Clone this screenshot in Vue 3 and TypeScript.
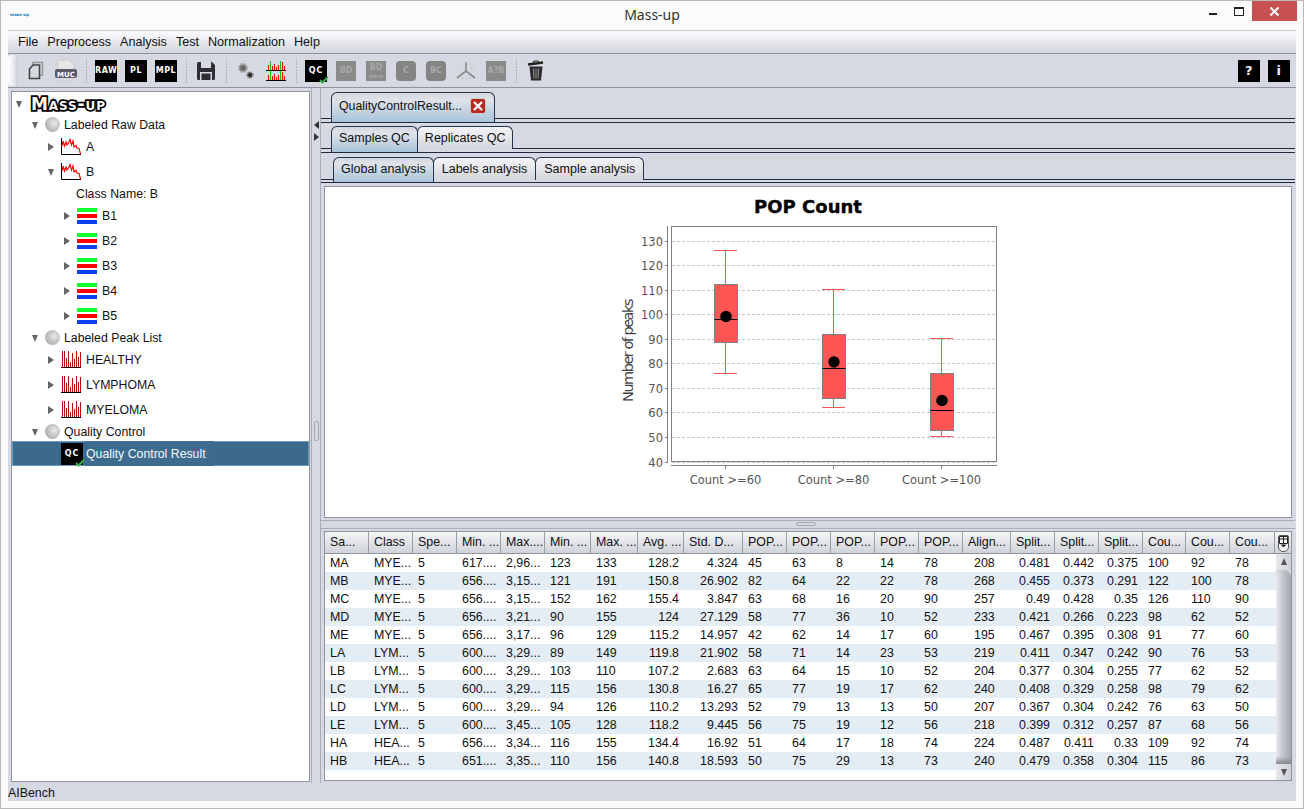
<template>
  <div class="window">
    <header class="titlebar">
      <div class="title-side">
        <span class="mini-logo">mass-up</span>
      </div>
      <div class="title">Mass-up</div>
      <div class="title-side controls">
        <span class="ctl-min"></span>
        <span class="ctl-max"></span>
        <span class="ctl-close">
          <svg width="11" height="9" viewBox="0 0 11 9"><path d="M1.5 .5L9.5 8.5M9.5 .5L1.5 8.5" stroke="#fff" stroke-width="2" /></svg>
        </span>
      </div>
    </header>

    <div class="app">
      <nav class="menubar">
        <span v-for="m in menus" :key="m" class="menu-item">{{ m }}</span>
      </nav>

      <div class="toolbar">
        <div class="handle"></div>

        <div class="slot">
          <svg width="16" height="20" viewBox="0 0 16 20" fill="none" stroke="#444" stroke-width="1.6">
            <path d="M5 4V1.5H14.5V14H12" stroke="#999" />
            <path d="M5 4H11.5V17.5H1.5V8Z" />
          </svg>
        </div>
        <div class="slot">
          <svg width="24" height="24" viewBox="0 0 24 24">
            <path d="M4 1H15L20 6V12H4Z" fill="#e6e6e6" stroke="#ccc" />
            <rect x="1" y="10" width="22" height="9" rx="2" fill="#5a5a6a" />
            <text x="12" y="17.5" class="muc">MUC</text>
            <path d="M3 22H21" stroke="#ccc" />
          </svg>
        </div>
        <div class="tsep"></div>

        <div class="slot"><span class="blk">RAW</span></div>
        <div class="slot"><span class="blk">PL</span></div>
        <div class="slot"><span class="blk">MPL</span></div>
        <div class="tsep"></div>

        <div class="slot">
          <svg width="20" height="20" viewBox="0 0 20 20">
            <path d="M1 2.5A1.5 1.5 0 0 1 2.5 1H16L19 4V17.5A1.5 1.5 0 0 1 17.5 19H2.5A1.5 1.5 0 0 1 1 17.5Z" fill="#2d2d33" />
            <rect x="5" y="1" width="10" height="6" fill="#d6d9e1" />
            <rect x="4" y="11" width="12" height="8" fill="#d6d9e1" />
            <rect x="5.5" y="12.5" width="9" height="6.5" fill="#2d2d33" />
          </svg>
        </div>
        <div class="tsep"></div>

        <div class="slot">
          <svg width="18" height="18" viewBox="0 0 18 18">
            <circle cx="6" cy="6" r="3.8" fill="#666" stroke="#a8a8a8" stroke-width="2.4" stroke-dasharray="2 1" />
            <circle cx="13" cy="13" r="2.8" fill="#222" stroke="#8e8e8e" stroke-width="2" stroke-dasharray="1.6 1" />
          </svg>
        </div>
        <div class="slot">
          <svg width="20" height="22" viewBox="0 0 20 22">
            <g v-for="row in [10, 20]" :key="row">
              <rect
                v-for="bar in miniBars"
                :key="bar.x"
                :x="bar.x"
                :y="row - bar.h"
                width="1"
                :height="bar.h"
                :fill="bar.c"
              />
              <rect x="0" :y="row" width="20" height="1" fill="#000" />
            </g>
          </svg>
        </div>
        <div class="tsep"></div>

        <div class="slot">
          <span class="blk qc">QC
            <svg class="check" width="10" height="8" viewBox="0 0 10 8"><path d="M1 4L3.5 6.5L9 1" fill="none" stroke="#35b04a" stroke-width="2" /></svg>
          </span>
        </div>
        <div class="slot"><span class="off">BD</span></div>
        <div class="slot"><span class="off two">BD<i>Intra</i></span></div>
        <div class="slot"><span class="off round">C</span></div>
        <div class="slot"><span class="off round">BC</span></div>
        <div class="slot">
          <svg width="20" height="20" viewBox="0 0 20 20">
            <path d="M10 1V10M10 10L1 17M10 10L19 17" stroke="#8a8a8a" stroke-width="1.6" fill="none" />
            <path d="M14 3h1M17 5h1M15 7h1M6 17h1M10 18h1M13 17h1" stroke="#aaa" stroke-width="1" />
          </svg>
        </div>
        <div class="slot"><span class="off">A?B</span></div>
        <div class="tsep"></div>

        <div class="slot">
          <svg width="18" height="21" viewBox="0 0 18 21">
            <path d="M1 4.5L16 2.5" stroke="#222" stroke-width="2.4" />
            <path d="M6 3L7 1H11L12 3" stroke="#222" fill="none" />
            <path d="M2.5 6.5H15.5L14 20.5H4Z" fill="#2b2b2b" />
            <path d="M6.5 8.5L7 18.5M9 8.5V18.5M11.5 8.5L11 18.5" stroke="#9a9a9a" stroke-width="1" />
          </svg>
        </div>

        <div class="slot push"><span class="blk big">?</span></div>
        <div class="slot"><span class="blk big">i</span></div>
      </div>

      <main class="main">
        <aside class="tree">
          <div class="row root">
            <span class="arrow down"></span>
            <span class="logo">Mass-up</span>
          </div>
          <div
            v-for="n in nodes"
            :key="n.label"
            class="row"
            :class="[`d${n.depth}`, { tall: n.icon !== 'sphere' && n.icon !== 'none', selected: n.selected }]"
          >
            <span v-if="n.icon !== 'none'" class="arrow" :class="n.arrow"></span>
            <span v-if="n.icon === 'sphere'" class="sphere"></span>
            <svg v-else-if="n.icon === 'line'" class="ico" width="20" height="17" viewBox="0 0 20 17">
              <path d="M.5 0V16.5H20" fill="none" stroke="#000" />
              <path d="M1 8L2 3L3.5 8L5 4L6 7L7.5 5L9 1.5L10.5 7L12 3L13 9L15 7.5L16 10L18 10.5L19.5 16" fill="none" stroke="#f00" stroke-width="1.2" />
            </svg>
            <svg v-else-if="n.icon === 'bars'" class="ico" width="20" height="16" viewBox="0 0 20 16">
              <rect width="20" height="4" fill="#10ff30" />
              <rect y="6" width="20" height="4" fill="#f00" />
              <rect y="12" width="20" height="4" fill="#0a40f0" />
            </svg>
            <svg v-else-if="n.icon === 'peaks'" class="ico" width="20" height="17" viewBox="0 0 20 17">
              <rect
                v-for="(h, i) in peakHeights"
                :key="i"
                :x="1 + i * 2"
                :y="16 - h"
                width="1"
                :height="h"
                fill="#b81010"
              />
              <rect y="16" width="20" height="1" fill="#000" />
            </svg>
            <span v-else-if="n.icon === 'qc'" class="blk qc">QC
              <svg class="check" width="10" height="8" viewBox="0 0 10 8"><path d="M1 4L3.5 6.5L9 1" fill="none" stroke="#35b04a" stroke-width="2" /></svg>
            </span>
            <span class="label">{{ n.label }}</span>
          </div>
        </aside>

        <div class="vsplit">
          <span class="tri-left"></span>
          <span class="tri-right"></span>
          <span class="vgrip"></span>
        </div>

        <section class="content">
          <div class="strip s1">
            <span class="lead"></span>
            <div class="tab active big-tab">
              <span>QualityControlResult...</span>
              <span class="close-x">
                <svg width="10" height="10" viewBox="0 0 10 10"><path d="M1 1L9 9M9 1L1 9" stroke="#fff" stroke-width="2.4" /></svg>
              </span>
            </div>
            <span class="lead fill"></span>
          </div>

          <div class="strip s2">
            <span class="lead"></span>
            <div class="tab active">Samples QC</div>
            <div class="tab">Replicates QC</div>
            <span class="lead fill"></span>
          </div>

          <div class="strip s3">
            <span class="lead"></span>
            <div class="tab active">Global analysis</div>
            <div class="tab">Labels analysis</div>
            <div class="tab">Sample analysis</div>
            <span class="lead fill"></span>
          </div>

          <div class="chart">
            <svg width="966" height="330" viewBox="325 187 966 330">
              <text x="808" y="213" class="c-title">POP Count</text>

              <rect x="671.5" y="226.5" width="325" height="235" fill="#fff" stroke="#808080" />
              <path
                v-for="t in ticks"
                :key="t"
                :d="`M672 ${yOf(t)}H996`"
                stroke="#c6c6c6"
                stroke-dasharray="3 2"
                fill="none"
              />
              <path d="M667.5 226V462" stroke="#808080" fill="none" />
              <path d="M671 465.5H997" stroke="#808080" fill="none" />
              <g v-for="t in ticks" :key="t">
                <path :d="`M665 ${yOf(t)}H668`" stroke="#808080" />
                <text :x="663" :y="yOf(t) + 4.5" class="c-tick" text-anchor="end">{{ t }}</text>
              </g>

              <text transform="translate(633 351) rotate(-90)" class="c-ylabel">Number of peaks</text>

              <g v-for="b in boxes" :key="b.label">
                <path :d="`M${b.x} ${b.hi}V${b.lo}`" stroke="#ff5555" />
                <path :d="`M${b.x - 11.5} ${b.hi}H${b.x + 11.5}M${b.x - 11.5} ${b.lo}H${b.x + 11.5}`" stroke="#ff5555" />
                <rect :x="b.x - 11" :y="b.top" width="23" :height="b.bottom - b.top" fill="#ff5555" stroke="#808080" />
                <path :d="`M${b.x - 11} ${b.med}H${b.x + 12}`" stroke="#000" />
                <circle :cx="b.x + 0.5" :cy="b.mean" r="5.7" fill="#000" />
                <path :d="`M${b.x} 465V469`" stroke="#808080" />
                <text :x="b.x" y="484" class="c-cat">{{ b.label }}</text>
              </g>
            </svg>
          </div>

          <div class="hsplit"><span class="hgrip"></span></div>

          <div class="table">
            <div class="grid-wrap">
              <div class="cols head">
                <span v-for="(h, i) in headers" :key="i" class="th">{{ h }}</span>
              </div>
              <div v-for="r in rows" :key="r[0]" class="cols tr">
                <span
                  v-for="(c, i) in r"
                  :key="i"
                  class="td"
                  :class="{ num: rightCols.includes(i), mid: i === 14 }"
                >{{ c }}</span>
              </div>
            </div>
            <div class="scroll">
              <div class="corner">
                <span class="corner-btn">
                  <svg width="9" height="12" viewBox="0 0 9 12" fill="none" stroke="#222">
                    <path d="M.5 .5H8.5V7.5H.5ZM.5 3H8.5M4.5 .5V7.5" />
                    <path d="M1.5 8.5H7.5L4.5 11.5Z" fill="#222" stroke="none" />
                  </svg>
                </span>
              </div>
              <div class="sb-btn up"></div>
              <div class="sb-thumb"></div>
              <div class="sb-btn dn"></div>
            </div>
          </div>
        </section>
      </main>

      <footer class="status">AIBench</footer>
    </div>
  </div>
</template>

<script setup lang="ts">
type TreeNode = {
  label: string;
  depth: number;
  icon: "sphere" | "line" | "bars" | "peaks" | "qc" | "none";
  arrow: "right" | "down" | "";
  selected?: boolean;
};

const menus = ["File", "Preprocess", "Analysis", "Test", "Normalization", "Help"];

const miniBars = [
  { x: 2, h: 5, c: "#f00" },
  { x: 4, h: 9, c: "#0c0" },
  { x: 6, h: 4, c: "#f00" },
  { x: 8, h: 6, c: "#f00" },
  { x: 10, h: 3, c: "#f00" },
  { x: 12, h: 5, c: "#f00" },
  { x: 14, h: 9, c: "#0c0" },
  { x: 16, h: 8, c: "#f00" },
  { x: 18, h: 4, c: "#f00" },
];

const peakHeights = [16, 16, 9, 16, 5, 14, 8, 16, 10, 15];

const nodes: TreeNode[] = [
  { label: "Labeled Raw Data", depth: 1, icon: "sphere", arrow: "down" },
  { label: "A", depth: 2, icon: "line", arrow: "right" },
  { label: "B", depth: 2, icon: "line", arrow: "down" },
  { label: "Class Name: B", depth: 3, icon: "none", arrow: "" },
  { label: "B1", depth: 3, icon: "bars", arrow: "right" },
  { label: "B2", depth: 3, icon: "bars", arrow: "right" },
  { label: "B3", depth: 3, icon: "bars", arrow: "right" },
  { label: "B4", depth: 3, icon: "bars", arrow: "right" },
  { label: "B5", depth: 3, icon: "bars", arrow: "right" },
  { label: "Labeled Peak List", depth: 1, icon: "sphere", arrow: "down" },
  { label: "HEALTHY", depth: 2, icon: "peaks", arrow: "right" },
  { label: "LYMPHOMA", depth: 2, icon: "peaks", arrow: "right" },
  { label: "MYELOMA", depth: 2, icon: "peaks", arrow: "right" },
  { label: "Quality Control", depth: 1, icon: "sphere", arrow: "down" },
  { label: "Quality Control Result", depth: 2, icon: "qc", arrow: "", selected: true },
];

const ticks = [130, 120, 110, 100, 90, 80, 70, 60, 50, 40];
const yOf = (v: number) => Math.round(461.5 - (v - 40) * 2.4555) + 0.5;

const boxes = [
  { label: "Count >=60", x: 725.5, hi: 250.5, lo: 373.5, top: 284.5, bottom: 342.5, med: 319.5, mean: 316.5 },
  { label: "Count >=80", x: 833.5, hi: 289.5, lo: 407.5, top: 334.5, bottom: 398.5, med: 368.5, mean: 362 },
  { label: "Count >=100", x: 941.5, hi: 338.5, lo: 436.5, top: 373.5, bottom: 430.5, med: 410.5, mean: 400.5 },
];

const headers = [
  "Sa...", "Class", "Spe...", "Min. ...", "Max....", "Min. ...", "Max. ...", "Avg. ...", "Std. D...",
  "POP...", "POP...", "POP...", "POP...", "POP...", "Align...", "Split...", "Split...", "Split...",
  "Cou...", "Cou...", "Cou...",
];

// float columns are right aligned, the same as the JTable renderer
const rightCols = [7, 8, 15, 16, 17];

const rows: string[][] = [
  ["MA", "MYE...", "5", "617....", "2,96...", "123", "133", "128.2", "4.324", "45", "63", "8", "14", "78", "208", "0.481", "0.442", "0.375", "100", "92", "78"],
  ["MB", "MYE...", "5", "656....", "3,15...", "121", "191", "150.8", "26.902", "82", "64", "22", "22", "78", "268", "0.455", "0.373", "0.291", "122", "100", "78"],
  ["MC", "MYE...", "5", "656....", "3,15...", "152", "162", "155.4", "3.847", "63", "68", "16", "20", "90", "257", "0.49", "0.428", "0.35", "126", "110", "90"],
  ["MD", "MYE...", "5", "656....", "3,21...", "90", "155", "124", "27.129", "58", "77", "36", "10", "52", "233", "0.421", "0.266", "0.223", "98", "62", "52"],
  ["ME", "MYE...", "5", "656....", "3,17...", "96", "129", "115.2", "14.957", "42", "62", "14", "17", "60", "195", "0.467", "0.395", "0.308", "91", "77", "60"],
  ["LA", "LYM...", "5", "600....", "3,29...", "89", "149", "119.8", "21.902", "58", "71", "14", "23", "53", "219", "0.411", "0.347", "0.242", "90", "76", "53"],
  ["LB", "LYM...", "5", "600....", "3,29...", "103", "110", "107.2", "2.683", "63", "64", "15", "10", "52", "204", "0.377", "0.304", "0.255", "77", "62", "52"],
  ["LC", "LYM...", "5", "600....", "3,29...", "115", "156", "130.8", "16.27", "65", "77", "19", "17", "62", "240", "0.408", "0.329", "0.258", "98", "79", "62"],
  ["LD", "LYM...", "5", "600....", "3,29...", "94", "126", "110.2", "13.293", "52", "79", "13", "13", "50", "207", "0.367", "0.304", "0.242", "76", "63", "50"],
  ["LE", "LYM...", "5", "600....", "3,45...", "105", "128", "118.2", "9.445", "56", "75", "19", "12", "56", "218", "0.399", "0.312", "0.257", "87", "68", "56"],
  ["HA", "HEA...", "5", "656....", "3,34...", "116", "155", "134.4", "16.92", "51", "64", "17", "18", "74", "224", "0.487", "0.411", "0.33", "109", "92", "74"],
  ["HB", "HEA...", "5", "651....", "3,35...", "110", "156", "140.8", "18.593", "50", "75", "29", "13", "73", "240", "0.479", "0.358", "0.304", "115", "86", "73"],
];
</script>

<style>
html,
body {
  margin: 0;
  background: #fafafa;
}
</style>

<style scoped>
.window {
  width: 1304px;
  height: 809px;
  box-sizing: border-box;
  border: 1px solid #b9b9b9;
  background: #fbfbfb;
  display: flex;
  flex-direction: column;
  font-family: "Liberation Sans", Arial, sans-serif;
  font-size: 12.4px;
  color: #111;
  overflow: hidden;
}

.titlebar {
  height: 29px;
  display: flex;
  align-items: flex-start;
  flex: none;
}
.title-side {
  flex: 1;
  display: flex;
}
.mini-logo {
  font: bold 4px/1 "DejaVu Sans", sans-serif;
  color: #1a7fb5;
  margin: 12px 0 0 9px;
}
.title {
  font: 14px/1 "Noto Sans", "Open Sans", sans-serif;
  color: #333;
  padding-top: 7px;
}
.controls {
  justify-content: flex-end;
}
.ctl-min {
  width: 8px;
  height: 2px;
  background: #222;
  margin: 12px 0 0 0;
}
.ctl-max {
  width: 8px;
  height: 6px;
  border: 1px solid #222;
  border-top-width: 2px;
  margin: 6px 0 0 17px;
}
.ctl-close {
  width: 45px;
  height: 20px;
  background: #c75050;
  margin-left: 8px;
  margin-right: 6px;
  display: flex;
  align-items: center;
  justify-content: center;
}

.app {
  flex: 1;
  margin: 0 7px 7px 7px;
  border-top: 1px solid #ccc;
  background: #d6d9e1;
  display: flex;
  flex-direction: column;
  min-height: 0;
}

.menubar {
  height: 22px;
  flex: none;
  display: flex;
  align-items: center;
  padding-left: 10px;
  gap: 9px;
  background: linear-gradient(#fdfdfe, #e4e6eb 55%, #d3d6de);
  border-bottom: 1px solid #8f949c;
  font-size: 12.6px;
}

.toolbar {
  height: 33px;
  flex: none;
  display: flex;
  align-items: center;
  border-bottom: 1px solid #8f949c;
  padding-right: 2px;
}
.handle {
  width: 10px;
  height: 31px;
  margin-right: 3px;
  border-radius: 4px 0 0 4px;
  background: linear-gradient(90deg, #fff, #e6e8ee 60%, #c9ccd4);
}
.slot {
  width: 30px;
  height: 26px;
  display: flex;
  align-items: center;
  justify-content: center;
  flex: none;
}
.push {
  margin-left: auto;
}
.tsep {
  width: 10px;
  height: 26px;
  flex: none;
  background: linear-gradient(#8b8f98 50%, transparent 50%) center / 1px 3px repeat-y;
}
.blk {
  position: relative;
  width: 22px;
  height: 22px;
  background: #000;
  color: #fff;
  font: bold 8px/22px "DejaVu Sans", sans-serif;
  letter-spacing: 0.5px;
  text-align: center;
  flex: none;
}
.blk.big {
  font-size: 13px;
  color: #eee;
}
.blk.qc {
  font-size: 8px;
  line-height: 21px;
  letter-spacing: 0.8px;
}
.check {
  position: absolute;
  right: -2px;
  bottom: -2px;
}
.off {
  width: 20px;
  height: 20px;
  background: #8a8a8a;
  color: #a8a8a8;
  font: bold 8px/20px "DejaVu Sans", sans-serif;
  text-align: center;
}
.off.two {
  line-height: 9px;
  padding-top: 2px;
  height: 18px;
}
.off.two i {
  display: block;
  font-size: 5px;
  line-height: 8px;
}
.off.round {
  border-radius: 4px;
  background: #848484;
}
.muc {
  font: bold 7px "DejaVu Sans", sans-serif;
  fill: #fff;
  text-anchor: middle;
}

.main {
  flex: 1;
  min-height: 0;
  display: flex;
  padding-left: 3px;
}

.tree {
  width: 299px;
  margin: 3px 0 1px;
  box-sizing: border-box;
  border: 1px solid #8f949c;
  background: #fff;
  flex: none;
  font-size: 12.3px;
  padding-top: 1px;
}
.row {
  height: 19px;
  display: flex;
  align-items: center;
}
.row.tall {
  height: 25px;
}
.row.root {
  height: 22px;
  padding-left: 4px;
}
.d1 {
  padding-left: 20px;
}
.d2 {
  padding-left: 36px;
}
.d3 {
  padding-left: 52px;
}
.d3:not(.tall) {
  padding-left: 64px;
}
.arrow {
  width: 13px;
  flex: none;
  display: block;
  height: 8px;
  position: relative;
}
.arrow.right::before {
  content: "";
  position: absolute;
  left: 0;
  top: 0;
  border-left: 6px solid #666;
  border-top: 4px solid transparent;
  border-bottom: 4px solid transparent;
}
.arrow.down::before {
  content: "";
  position: absolute;
  left: 0;
  top: 1px;
  border-top: 7px solid #666;
  border-left: 3.5px solid transparent;
  border-right: 3.5px solid transparent;
}
.logo {
  font: bold 17px/1 "DejaVu Sans", sans-serif;
  font-variant: small-caps;
  color: #fff;
  -webkit-text-stroke: 3.5px #000;
  paint-order: stroke fill;
  letter-spacing: 0.9px;
  margin-left: 2px;
}
.sphere {
  width: 15px;
  height: 15px;
  border-radius: 50%;
  flex: none;
  background: radial-gradient(circle at 62% 42%, #e8e9e6, #b5b7b4 65%, #8e908e);
}
.ico {
  flex: none;
}
.label {
  margin-left: 5px;
  white-space: nowrap;
}
.sphere + .label {
  margin-left: 4px;
}
.d3:not(.tall) .label {
  margin-left: 0;
}
.row.selected {
  background: #3b6a8c;
  box-shadow: inset 0 0 0 1px #6b9cc4;
  color: #f4f7fa;
}
.row.selected .label {
  margin-left: 2px;
  padding: 1px 8px 0 1px;
  background: #3d6c8f;
  line-height: 24px;
}

.vsplit {
  width: 10px;
  margin-left: 1px;
  flex: none;
  box-sizing: border-box;
  border-left: 1px solid #a9adb5;
  border-right: 1px solid #a9adb5;
  display: flex;
  flex-direction: column;
  align-items: center;
  padding-top: 33px;
}
.tri-left {
  border-right: 5px solid #333;
  border-top: 4px solid transparent;
  border-bottom: 4px solid transparent;
}
.tri-right {
  border-left: 5px solid #333;
  border-top: 4px solid transparent;
  border-bottom: 4px solid transparent;
  margin-top: 4px;
}
.vgrip {
  width: 3px;
  height: 18px;
  border: 1px solid #a4a8b0;
  border-radius: 2px;
  margin-top: 280px;
}

.content {
  flex: 1;
  min-width: 0;
  display: flex;
  flex-direction: column;
  padding: 4px 4px 0 3px;
}
.strip {
  display: flex;
  align-items: flex-start;
  flex: none;
  margin: 0 -3px;
  border-bottom: 1px solid #1c2b40;
}
.lead {
  width: 10px;
  flex: none;
  border-bottom: 1px solid #1c2b40;
  box-sizing: border-box;
}
.lead.fill {
  flex: 1;
}
.tab {
  box-sizing: border-box;
  border: 1px solid #24344c;
  border-bottom: none;
  border-radius: 6px 6px 0 0;
  background: linear-gradient(#f3f4f6, #d3d6dc);
  display: flex;
  align-items: center;
  padding: 0 7px;
  margin-left: -1px;
  white-space: nowrap;
  font-size: 12.5px;
}
.tab:nth-child(2) {
  margin-left: 0;
}
.tab.active {
  background: linear-gradient(#d6d9e1 5%, #dfe3e9 25%, #a9c3db);
}
.s1 {
  height: 30px;
}
.s1 .lead {
  height: 27px;
}
.s1 .tab {
  height: 30px;
  padding-bottom: 4px;
}
.big-tab {
  width: 164px;
  justify-content: space-between;
  font-size: 12.3px;
}
.close-x {
  width: 16px;
  height: 16px;
  background: #b8281c;
  border: 1px solid #c8c8c8;
  border-radius: 3px;
  box-sizing: border-box;
  display: flex;
  align-items: center;
  justify-content: center;
  margin-right: 1px;
}
.s2 {
  margin-top: 3px;
  height: 26px;
}
.s2 .lead {
  height: 23px;
}
.s2 .tab {
  height: 23px;
}
.s2 .tab.active {
  height: 26px;
  padding-bottom: 3px;
}
.s3 {
  margin-top: 4px;
  height: 25px;
}
.s3 .lead {
  height: 23px;
}
.s3 .lead:first-child {
  width: 12px;
}
.s3 .tab {
  height: 23px;
  padding: 0 8px;
}
.s3 .tab.active {
  height: 25px;
  padding: 0 7px 2px;
}

.chart {
  margin-top: 3px;
  height: 332px;
  flex: none;
  box-sizing: border-box;
  border: 1px solid #8f949c;
  background: #fff;
}
.chart svg {
  display: block;
}
.c-title {
  font: bold 18px "DejaVu Sans", sans-serif;
  text-anchor: middle;
  fill: #000;
  stroke: #000;
  stroke-width: 0.35px;
}
.c-tick,
.c-cat {
  font: 11.5px "DejaVu Sans", sans-serif;
  fill: #555;
}
.c-cat {
  text-anchor: middle;
  font-size: 11.5px;
}
.c-ylabel {
  font: 14.5px "DejaVu Sans", sans-serif;
  letter-spacing: -1.5px;
  fill: #444;
  text-anchor: middle;
}

.hsplit {
  height: 7px;
  margin: 2px -3px 2px;
  border-top: 1px solid #a9adb5;
  border-bottom: 1px solid #a9adb5;
  display: flex;
  justify-content: center;
  flex: none;
}
.hgrip {
  width: 18px;
  height: 2px;
  margin-top: 1px;
  border: 1px solid #a4a8b0;
  border-radius: 2px;
  margin-right: 4px;
}

.table {
  height: 250px;
  flex: none;
  box-sizing: border-box;
  border: 1px solid #8f949c;
  background: #fff;
  display: flex;
}
.grid-wrap {
  width: 951px;
  flex: none;
}
.cols {
  display: grid;
  grid-template-columns: 44px 44px 44px 44px 44px 46px 47px 46px 59px 44px 44px 44px 44px 44px 48px 44px 44px 44px 43px 44px 45px;
}
.head {
  height: 22px;
  background: linear-gradient(#f4f5f7, #d0d3da);
  border-bottom: 1px solid #8f949c;
  box-sizing: border-box;
}
.th {
  padding-left: 5px;
  line-height: 21px;
  border-right: 1px solid #9a9ea7;
  font-size: 12.4px;
  white-space: nowrap;
  overflow: hidden;
}
.tr {
  height: 18px;
  line-height: 18px;
  font-size: 12.4px;
}
.tr:nth-child(odd) {
  background: #e4ecf4;
}
.td {
  padding-left: 5px;
  white-space: nowrap;
  overflow: hidden;
}
.td.num {
  padding: 0 5px 0 0;
  text-align: right;
}
.td.mid {
  padding-left: 11px;
}

.scroll {
  flex: 1;
  display: flex;
  flex-direction: column;
  background: #d6d9e1;
}
.corner {
  height: 22px;
  flex: none;
  border-bottom: 1px solid #8f949c;
  box-sizing: border-box;
  display: flex;
  align-items: flex-start;
  justify-content: center;
  background: linear-gradient(#f4f5f7, #d0d3da);
}
.corner-btn {
  width: 11px;
  height: 17px;
  margin-top: 3px;
  box-sizing: border-box;
  border: 1px solid #555;
  border-radius: 2px 2px 5px 5px;
  background: #f2f3f5;
  display: flex;
  justify-content: center;
}
.sb-btn {
  height: 16px;
  flex: none;
  background: linear-gradient(90deg, #e8e9ed, #cdd0d6);
  position: relative;
}
.sb-btn::before {
  content: "";
  position: absolute;
  left: 5px;
  border-left: 3.5px solid transparent;
  border-right: 3.5px solid transparent;
}
.sb-btn.up::before {
  top: 4px;
  border-bottom: 7px solid #555;
}
.sb-btn.dn::before {
  top: 5px;
  border-top: 7px solid #555;
}
.sb-thumb {
  flex: 1;
  border-radius: 7px 7px 0 0;
  background:
    linear-gradient(transparent 96%, #85888f),
    linear-gradient(90deg, #e9eaee, #c3c6cc 45%, #a3a6ad);
}

.status {
  height: 18px;
  flex: none;
  line-height: 21px;
  font-size: 12.4px;
}
</style>
